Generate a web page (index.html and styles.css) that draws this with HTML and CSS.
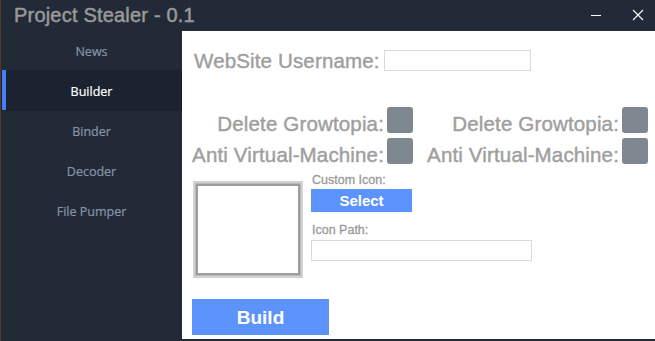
FILE: index.html
```html
<!DOCTYPE html>
<html>
<head>
<meta charset="utf-8">
<link rel="stylesheet" href="styles.css">
</head>
<body>
<div class="window">
  <div class="titlebar">
    <div class="title">Project Stealer - 0.1</div>
    <div class="controls">
      <svg class="ctl" width="14" height="14" viewBox="0 0 14 14"><line x1="2" y1="7.5" x2="12" y2="7.5" stroke="#ffffff" stroke-width="1"/></svg>
      <svg class="ctl" width="14" height="14" viewBox="0 0 14 14"><path d="M2 2 L12 12 M12 2 L2 12" stroke="#ffffff" stroke-width="1.1"/></svg>
    </div>
  </div>
  <div class="main">
    <nav class="sidebar">
      <div class="nav-item">News</div>
      <div class="nav-item active">Builder</div>
      <div class="nav-item">Binder</div>
      <div class="nav-item">Decoder</div>
      <div class="nav-item">File Pumper</div>
    </nav>
    <section class="content">
      <div class="user-row">
        <span class="big-label">WebSite Username:</span>
        <div class="textbox user-box"></div>
      </div>
      <div class="checks">
        <div class="check"><span class="big-label">Delete Growtopia:</span><span class="box"></span></div>
        <div class="check"><span class="big-label">Delete Growtopia:</span><span class="box"></span></div>
        <div class="check"><span class="big-label">Anti Virtual-Machine:</span><span class="box"></span></div>
        <div class="check"><span class="big-label">Anti Virtual-Machine:</span><span class="box"></span></div>
      </div>
      <div class="icon-row">
        <div class="icon-preview"></div>
        <div class="icon-side">
          <div class="small-label">Custom Icon:</div>
          <div class="btn select-btn">Select</div>
          <div class="small-label path-label">Icon Path:</div>
          <div class="textbox path-box"></div>
        </div>
      </div>
      <div class="btn build-btn">Build</div>
    </section>
  </div>
</div>
</body>
</html>
```
FILE: styles.css
```css
html, body {
  margin: 0;
  padding: 0;
}
body {
  width: 655px;
  height: 341px;
  overflow: hidden;
  background: #222a38;
}
.window {
  width: 655px;
  height: 341px;
  box-sizing: border-box;
  border-left: 1px solid #4d3b28;
  background: #222a38;
  display: flex;
  flex-direction: column;
}
.titlebar {
  height: 31px;
  display: flex;
  align-items: center;
  justify-content: space-between;
  flex: none;
}
.title {
  font-family: "Liberation Sans", Arial, sans-serif;
  font-size: 20px;
  color: #999999;
  padding-left: 13px;
  letter-spacing: 0.2px;
  margin-top: -1px;
  -webkit-text-stroke: 0.5px #999999;
}
.controls {
  display: flex;
  align-items: center;
  gap: 28px;
  padding-right: 10px;
  margin-top: -2px;
}
.ctl {
  display: block;
}
.main {
  display: flex;
  height: 308px;
  flex: none;
}
.sidebar {
  width: 181px;
  flex: none;
  display: flex;
  flex-direction: column;
}
.nav-item {
  height: 40px;
  display: flex;
  align-items: center;
  justify-content: center;
  font-family: "Open Sans", "Noto Sans", sans-serif;
  font-size: 12.5px;
  color: #8696aa;
  position: relative;
  margin-top: -1px;
  padding-top: 1px;
  -webkit-text-stroke: 0.2px #8696aa;
}
.nav-item.active {
  background: #1c2330;
  color: #ffffff;
  -webkit-text-stroke: 0.2px #ffffff;
}
.nav-item.active::before {
  content: "";
  position: absolute;
  left: 1px;
  top: 0;
  width: 4px;
  height: 40px;
  background: #4a7cf6;
}
.content {
  flex: 1;
  background: #ffffff;
  padding: 19px 0 0 10px;
  box-sizing: border-box;
  display: flex;
  flex-direction: column;
  align-items: flex-start;
}
.big-label {
  font-family: "Liberation Sans", Arial, sans-serif;
  font-size: 20.5px;
  color: #9f9f9f;
  letter-spacing: 0.15px;
  white-space: nowrap;
  -webkit-text-stroke: 0.45px #9f9f9f;
}
.user-row {
  display: flex;
  align-items: center;
  gap: 4px;
  margin-left: 2px;
  height: 21px;
}
.textbox {
  box-sizing: border-box;
  border: 1px solid #d6d9dd;
  background: #ffffff;
}
.user-box {
  width: 147px;
  height: 21px;
}
.checks {
  display: grid;
  grid-template-columns: 223px 223px;
  column-gap: 12px;
  row-gap: 5px;
  margin-top: 36px;
  margin-left: -2px;
}
.check {
  display: flex;
  justify-content: flex-end;
  align-items: center;
  gap: 3px;
  height: 26px;
}
.check .big-label {
  margin-top: 7px;
}
.box {
  width: 26px;
  height: 26px;
  border-radius: 3px;
  background: #7f8791;
  flex: none;
}
.icon-row {
  display: flex;
  align-items: flex-start;
  gap: 8px;
  margin-top: 9px;
  margin-left: 1px;
}
.icon-preview {
  width: 110px;
  height: 97px;
  box-sizing: border-box;
  margin-top: 8px;
  border: 2px solid #d2d2d2;
  box-shadow: inset 0 0 0 1px #b9b9b9, inset 0 0 0 3px #9c9c9c;
  background: #ffffff;
}
.icon-side {
  display: flex;
  flex-direction: column;
  align-items: flex-start;
}
.small-label {
  font-family: "Liberation Sans", Arial, sans-serif;
  font-size: 12.5px;
  color: #9a9a9a;
  line-height: 14px;
  margin-left: 1px;
  -webkit-text-stroke: 0.3px #9a9a9a;
}
.btn {
  background: #5c93fd;
  color: #ffffff;
  font-family: "Liberation Sans", Arial, sans-serif;
  font-weight: bold;
  display: flex;
  align-items: center;
  justify-content: center;
}
.select-btn {
  width: 101px;
  height: 23px;
  font-size: 15px;
  margin-top: 2px;
}
.path-label {
  margin-top: 11px;
}
.path-box {
  width: 221px;
  height: 21px;
  margin-top: 3px;
}
.build-btn {
  width: 137px;
  height: 36px;
  font-size: 19px;
  margin-top: 21px;
  padding-top: 2px;
  box-sizing: border-box;
}
```
